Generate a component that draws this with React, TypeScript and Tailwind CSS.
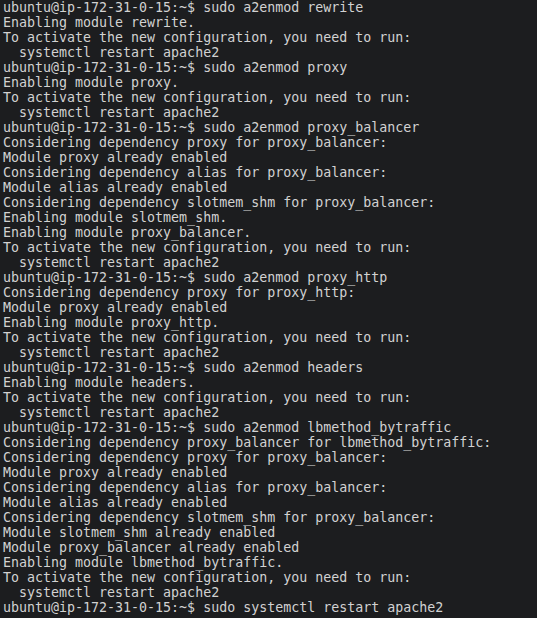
const lines = [
  "ubuntu@ip-172-31-0-15:~$ sudo a2enmod rewrite",
  "Enabling module rewrite.",
  "To activate the new configuration, you need to run:",
  "  systemctl restart apache2",
  "ubuntu@ip-172-31-0-15:~$ sudo a2enmod proxy",
  "Enabling module proxy.",
  "To activate the new configuration, you need to run:",
  "  systemctl restart apache2",
  "ubuntu@ip-172-31-0-15:~$ sudo a2enmod proxy_balancer",
  "Considering dependency proxy for proxy_balancer:",
  "Module proxy already enabled",
  "Considering dependency alias for proxy_balancer:",
  "Module alias already enabled",
  "Considering dependency slotmem_shm for proxy_balancer:",
  "Enabling module slotmem_shm.",
  "Enabling module proxy_balancer.",
  "To activate the new configuration, you need to run:",
  "  systemctl restart apache2",
  "ubuntu@ip-172-31-0-15:~$ sudo a2enmod proxy_http",
  "Considering dependency proxy for proxy_http:",
  "Module proxy already enabled",
  "Enabling module proxy_http.",
  "To activate the new configuration, you need to run:",
  "  systemctl restart apache2",
  "ubuntu@ip-172-31-0-15:~$ sudo a2enmod headers",
  "Enabling module headers.",
  "To activate the new configuration, you need to run:",
  "  systemctl restart apache2",
  "ubuntu@ip-172-31-0-15:~$ sudo a2enmod lbmethod_bytraffic",
  "Considering dependency proxy_balancer for lbmethod_bytraffic:",
  "Considering dependency proxy for proxy_balancer:",
  "Module proxy already enabled",
  "Considering dependency alias for proxy_balancer:",
  "Module alias already enabled",
  "Considering dependency slotmem_shm for proxy_balancer:",
  "Module slotmem_shm already enabled",
  "Module proxy_balancer already enabled",
  "Enabling module lbmethod_bytraffic.",
  "To activate the new configuration, you need to run:",
  "  systemctl restart apache2",
  "ubuntu@ip-172-31-0-15:~$ sudo systemctl restart apache2",
];

export default function App() {
  return (
    <div className="w-[537px] h-[618px] overflow-hidden bg-[#1c1d1f] text-[#d2d2d2] pl-[3px] pt-0 font-['DejaVu_Sans_Mono','Liberation_Mono',monospace] text-[13.3px] leading-[15px]">
      {lines.map((l, i) => (
        <div key={i} className="whitespace-pre h-[15px]">
          {l}
        </div>
      ))}
    </div>
  );
}
